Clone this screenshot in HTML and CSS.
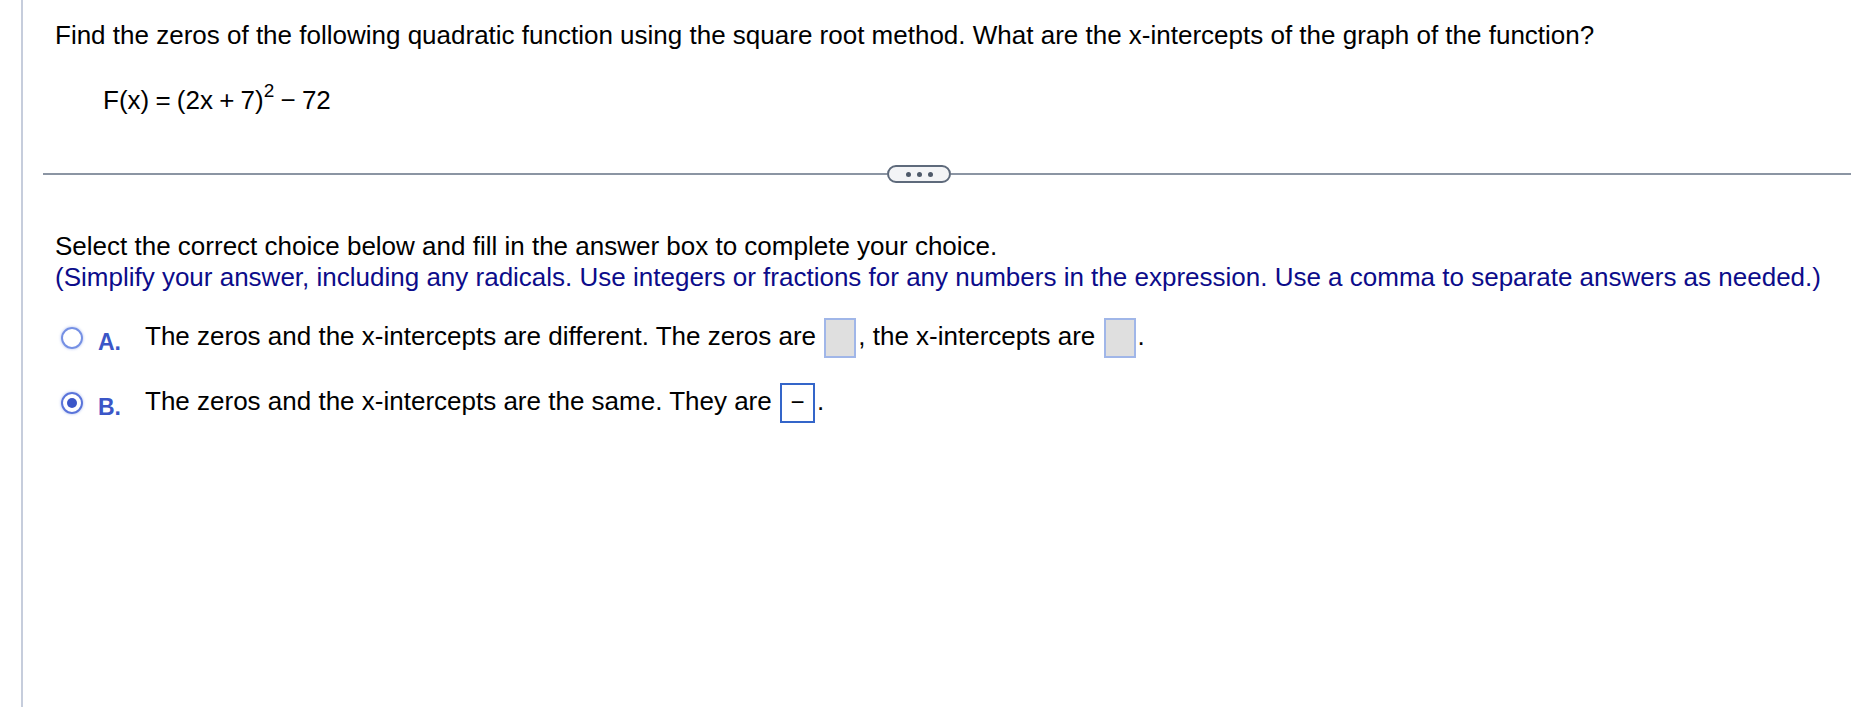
FILE: index.html
```html
<!DOCTYPE html>
<html lang="en">
<head>
	<meta charset="UTF-8">
	<title>Quadratic zeros</title>
	<link rel="stylesheet" href="styles.css">
</head>
<body>

	<!-- Painel da questao -->
	<div class="page">

		<p class="prompt">Find the zeros of the following quadratic function using the square root method. What are the x-intercepts of the graph of the function?</p>
		<p class="formula">F(x) = (2x + 7)<sup>2</sup> &minus; 72</p>

		<!-- Divisor com botao de expandir -->
		<div class="divider">
			<span class="rule rule-left"></span>
			<span class="more"><span class="dot"></span><span class="dot"></span><span class="dot"></span></span>
			<span class="rule rule-right"></span>
		</div>

		<p class="instr">Select the correct choice below and fill in the answer box to complete your choice.</p>
		<p class="hint">(Simplify your answer, including any radicals. Use integers or fractions for any numbers in the expression. Use a comma to separate answers as needed.)</p>

		<!-- Alternativas -->
		<div class="choices">
			<div class="choice">
				<span class="radio"></span>
				<span class="letter">A.</span>
				<span class="text">The zeros and the x-intercepts are different. The zeros are <span class="box"></span>, the x-intercepts are <span class="box"></span>.</span>
			</div>
			<div class="choice">
				<span class="radio checked"></span>
				<span class="letter">B.</span>
				<span class="text">The zeros and the x-intercepts are the same. They are <span class="box active">&minus;</span>.</span>
			</div>
		</div>

	</div>

</body>
</html>
```

FILE: styles.css
```css
	* {
		box-sizing: border-box;
	}

	body {
		margin: 0;
		font-family: "Liberation Sans", Arial, sans-serif;
		color: #000000;
		background: #ffffff;
		overflow: hidden;
	}

	div.page {
		margin-left: 21px;
		border-left: 2px solid #c6cddc;
		min-height: 707px;
	}

	p {
		margin: 0;
	}

	p.prompt {
		padding: 20px 0 0 32px;
		font-size: 26px;
		line-height: 30px;
	}

	p.formula {
		margin: 35px 0 0 80px;
		font-size: 26px;
		line-height: 30px;
		word-spacing: -1px;
	}

	p.formula sup {
		font-size: 19px;
		line-height: 0;
		vertical-align: 12px;
	}

	/* linha divisoria */
	div.divider {
		display: flex;
		align-items: center;
		height: 18px;
		margin: 50px 19px 0 20px;
	}

	span.rule {
		height: 2px;
		background-color: #8b95a3;
	}

	span.rule-left {
		width: 844px;
	}

	span.rule-right {
		flex: 1;
	}

	span.more {
		display: flex;
		align-items: center;
		justify-content: center;
		gap: 6px;
		width: 64px;
		height: 18px;
		border: 2px solid #5e6a7b;
		border-radius: 9px;
		background-color: #f3f4f6;
	}

	span.dot {
		width: 5px;
		height: 5px;
		border-radius: 50%;
		background-color: #4f5a6a;
	}

	p.instr, p.hint {
		padding-left: 32px;
		font-size: 26px;
		line-height: 31px;
	}

	p.instr {
		margin-top: 48px;
	}

	p.hint {
		color: #0c0c8a;
	}

	div.choices {
		display: flex;
		flex-direction: column;
		gap: 21px;
		margin-top: 23px;
	}

	div.choice {
		display: flex;
		align-items: center;
		height: 44px;
		padding-left: 38px;
	}

	span.radio {
		width: 22px;
		height: 22px;
		border: 2px solid #7590e4;
		border-radius: 50%;
		box-shadow: 0 0 3px rgba(117, 144, 228, 0.6);
		display: flex;
		align-items: center;
		justify-content: center;
	}

	span.radio.checked {
		border-color: #5a74da;
	}

	span.radio.checked::after {
		content: "";
		width: 10px;
		height: 10px;
		border-radius: 50%;
		background-color: #3b56c8;
	}

	span.letter {
		width: 47px;
		margin-left: 15px;
		margin-top: 8px;
		font-size: 23px;
		font-weight: bold;
		color: #3b56c7;
	}

	span.text {
		font-size: 26px;
		line-height: 30px;
	}

	span.box {
		display: inline-block;
		width: 32px;
		height: 40px;
		margin: 0 2px 0 1px;
		vertical-align: middle;
		border: 2px solid #a0b6e8;
		background-color: #dfdfdf;
	}

	span.box.active {
		width: 35px;
		border-color: #3465c9;
		background-color: #ffffff;
		text-align: center;
		font-size: 24px;
		line-height: 34px;
	}
```
